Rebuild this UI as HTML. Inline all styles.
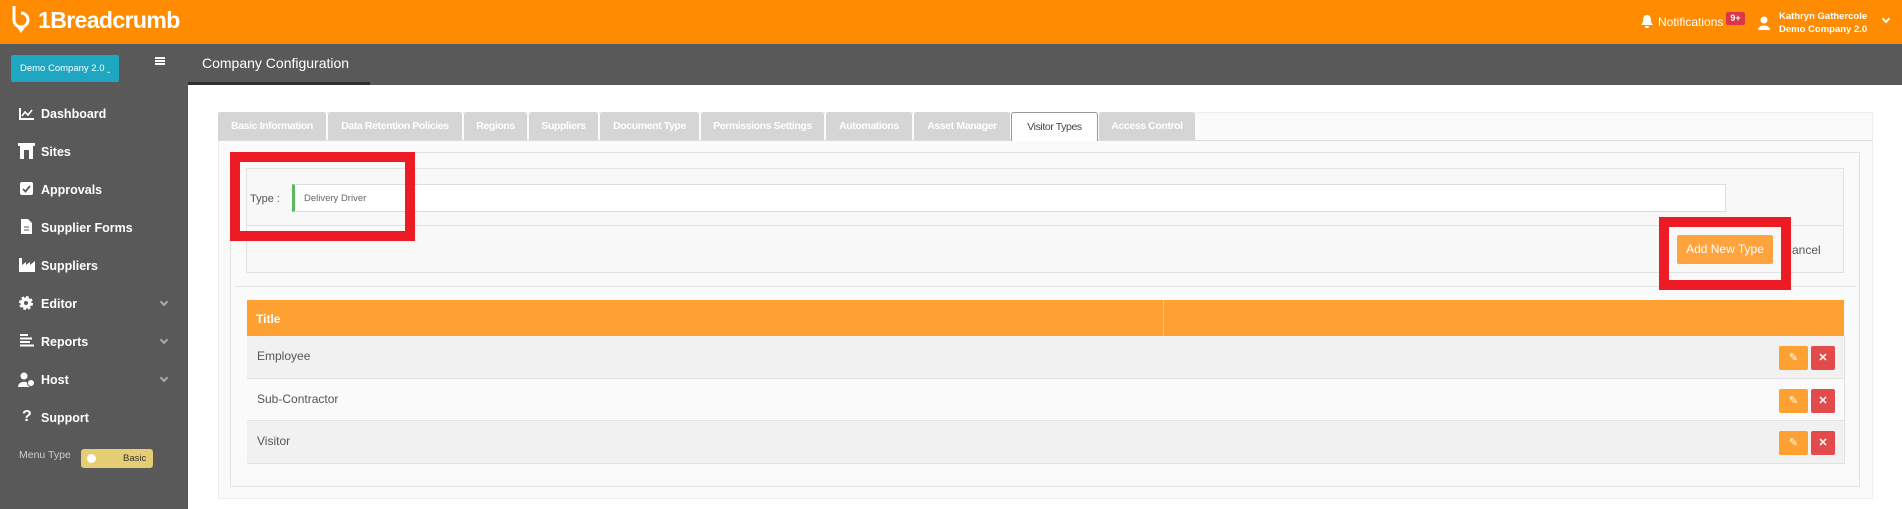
<!DOCTYPE html>
<html><head><meta charset="utf-8"><style>
*{box-sizing:border-box;margin:0;padding:0}
body{width:1902px;height:509px;overflow:hidden;font-family:"Liberation Sans",sans-serif;background:#fff;position:relative}
.a{position:absolute}
.hdr{left:0;top:0;width:1902px;height:44px;background:#ff8c00}
.bar{left:0;top:44px;width:1902px;height:41px;background:#595959}
.side{left:0;top:85px;width:188px;height:424px;background:#595959}
.mi{position:absolute;left:41px;color:#fff;font-size:12.5px;font-weight:bold}
.chev{position:absolute;left:161px;width:6px;height:6px;border-right:2px solid #aaa;border-bottom:2px solid #aaa;transform:rotate(45deg)}
.tab{position:absolute;top:112px;height:28px;background:#d5d5d5;border-radius:3px 3px 0 0;color:#fff;font-size:10.5px;font-weight:bold;text-align:center;line-height:28px;letter-spacing:-.4px}
.row{position:absolute;left:247px;width:1597px;border-bottom:1px solid #e2e2e2;font-size:12px;color:#555}
.row span{position:absolute;left:10px;top:13px}
.eb{position:absolute;width:29px;height:24px;background:#ffa033;border-radius:2px;color:#fff;font-size:11px;text-align:center;line-height:24px}
.db{position:absolute;width:24px;height:24px;background:#e24b4b;border-radius:2px;color:#fff;font-size:11px;font-weight:bold;text-align:center;line-height:24px}
</style></head><body>
<div class="a hdr"></div>
<svg class="a" style="left:9px;top:4px" width="24" height="30" viewBox="0 0 24 30"><path d="M5 2 L5 16 A7 7 0 1 0 12 9" fill="none" stroke="#fff" stroke-width="3"/><path d="M7 22 L12 29 L17 22" fill="#fff"/></svg>
<div class="a" style="left:38px;top:7px;color:#fff;font-size:23px;font-weight:bold;letter-spacing:-.6px">1Breadcrumb</div>
<svg class="a" style="left:1641px;top:14px" width="12" height="14" viewBox="0 0 12 14"><path d="M6 1 C2 1 2 5 2 8 L0 11 L12 11 L10 8 C10 5 10 1 6 1Z M4 12 h4 a2 2 0 0 1 -4 0z" fill="#fff"/></svg>
<div class="a" style="left:1658px;top:15px;color:#fff;font-size:12px">Notifications</div>
<div class="a" style="left:1726px;top:12px;width:19px;height:13px;background:#dc3545;border-radius:2px;color:#fff;font-size:9px;font-weight:bold;text-align:center;line-height:13px">9+</div>
<svg class="a" style="left:1758px;top:16px" width="12" height="14" viewBox="0 0 12 14"><circle cx="6" cy="4" r="3.5" fill="#fff"/><path d="M0 14 C0 8 12 8 12 14Z" fill="#fff"/></svg>
<div class="a" style="left:1779px;top:10px;color:#fff;font-size:9.5px;font-weight:bold;line-height:13px">Kathryn Gathercole<br>Demo Company 2.0</div>
<div class="a" style="left:1883px;top:16px;width:6px;height:6px;border-right:2px solid #fff;border-bottom:2px solid #fff;transform:rotate(45deg)"></div>

<div class="a bar"></div>
<div class="a" style="left:11px;top:55px;width:108px;height:27px;background:#1fa6c0;border-radius:2px;color:#fff;font-size:9.5px;line-height:27px;padding-left:9px">Demo Company 2.0 ˬ</div>
<div class="a" style="left:155px;top:57px;width:10px;height:2px;background:#fff;box-shadow:0 3px 0 #fff,0 6px 0 #fff"></div>
<div class="a" style="left:202px;top:55px;color:#fff;font-size:14px">Company Configuration</div>
<div class="a" style="left:188px;top:82px;width:182px;height:3px;background:#2f2f2f"></div>

<div class="a side"></div>
<div class="mi" style="top:107px">Dashboard</div>
<div class="mi" style="top:145px">Sites</div>
<div class="mi" style="top:183px">Approvals</div>
<div class="mi" style="top:221px">Supplier Forms</div>
<div class="mi" style="top:259px">Suppliers</div>
<div class="mi" style="top:297px">Editor</div>
<div class="mi" style="top:335px">Reports</div>
<div class="mi" style="top:373px">Host</div>
<div class="mi" style="top:411px">Support</div>
<svg class="a" style="left:19px;top:107px" width="16" height="13"><path d="M1 1V12H15" stroke="#fff" stroke-width="2" fill="none"/><path d="M3 9L6 5L9 8L13 3" stroke="#fff" stroke-width="1.6" fill="none"/></svg>
<svg class="a" style="left:18px;top:143px" width="17" height="16"><path d="M0 0H17V3H15V16H11V7H6V16H2V3H0Z" fill="#fff"/></svg>
<svg class="a" style="left:20px;top:182px" width="13" height="13"><rect width="13" height="13" rx="2" fill="#fff"/><path d="M3 7L5.5 9.5L10 4" stroke="#595959" stroke-width="1.8" fill="none"/></svg>
<svg class="a" style="left:21px;top:219px" width="11" height="15"><path d="M0 0H7L11 4V15H0Z" fill="#fff"/><path d="M3 8H8M3 11H8" stroke="#595959"/></svg>
<svg class="a" style="left:19px;top:258px" width="16" height="14"><path d="M0 0H3V7L7 4V7L11 4V7L16 3V14H0Z" fill="#fff"/></svg>
<svg class="a" style="left:19px;top:296px" width="14" height="14"><circle cx="7" cy="7" r="5.5" fill="#fff" stroke="#fff" stroke-width="3" stroke-dasharray="2.5 1.8"/><circle cx="7" cy="7" r="2" fill="#595959"/></svg>
<svg class="a" style="left:20px;top:334px" width="14" height="13"><path d="M0 1H8M0 4.5H12M0 8H10M0 11.5H14" stroke="#fff" stroke-width="2"/></svg>
<svg class="a" style="left:18px;top:372px" width="18" height="15"><circle cx="6" cy="4" r="3.5" fill="#fff"/><path d="M0 15C0 8 12 8 12 15Z" fill="#fff"/><circle cx="13" cy="11" r="3.5" fill="#fff" stroke="#595959"/></svg>
<div class="a" style="left:22px;top:408px;color:#fff;font-size:16px;font-weight:bold">?</div>
<div class="chev" style="top:299px"></div>
<div class="chev" style="top:337px"></div>
<div class="chev" style="top:375px"></div>
<div class="a" style="left:19px;top:449px;color:#ccc;font-size:10.5px">Menu Type</div>
<div class="a" style="left:81px;top:449px;width:72px;height:19px;background:#e5cd73;border-radius:3px"></div>
<div class="a" style="left:87px;top:454px;width:9px;height:9px;border-radius:50%;background:#fff"></div>
<div class="a" style="left:123px;top:453px;font-size:9.5px;color:#333">Basic</div>

<div class="a" style="left:218px;top:112px;width:1655px;height:387px;background:#fafafa;border:1px solid #eee"></div>
<div class="a" style="left:218px;top:140px;width:1655px;height:1px;background:#ddd"></div>
<div class="tab" style="left:218px;width:108px">Basic Information</div>
<div class="tab" style="left:328px;width:134px">Data Retention Policies</div>
<div class="tab" style="left:464px;width:63px">Regions</div>
<div class="tab" style="left:529px;width:69px">Suppliers</div>
<div class="tab" style="left:600px;width:99px">Document Type</div>
<div class="tab" style="left:701px;width:123px">Permissions Settings</div>
<div class="tab" style="left:826px;width:86px">Automations</div>
<div class="tab" style="left:914px;width:96px">Asset Manager</div>
<div class="tab" style="left:1011px;width:87px;background:#fff;border:1px solid #999;border-bottom:none;color:#444;height:29px;font-weight:normal">Visitor Types</div>
<div class="tab" style="left:1099px;width:96px">Access Control</div>

<div class="a" style="left:230px;top:152px;width:1630px;height:335px;border:1px solid #e3e3e3;background:#fafafa"></div>
<div class="a" style="left:246px;top:168px;width:1598px;height:105px;border:1px solid #e3e3e3;background:#f8f8f8"></div>
<div class="a" style="left:246px;top:225px;width:1598px;height:1px;background:#e3e3e3"></div>
<div class="a" style="left:250px;top:193px;font-size:11px;color:#555">Type :</div>
<div class="a" style="left:292px;top:184px;width:1434px;height:28px;background:#fff;border:1px solid #ddd;border-left:3px solid #5cb85c"></div>
<div class="a" style="left:304px;top:193px;font-size:9.5px;color:#666">Delivery Driver</div>
<div class="a" style="left:1677px;top:235px;width:96px;height:29px;background:#ffa33e;border-radius:2px;color:#fff;font-size:12px;line-height:29px;text-align:center">Add New Type</div>
<div class="a" style="left:1792px;top:243px;font-size:12px;color:#555">ancel</div>
<div class="a" style="left:235px;top:286px;width:1621px;height:1px;background:#e3e3e3"></div>

<div class="a" style="left:230px;top:152px;width:185px;height:89px;border:10px solid #ed1c24"></div>
<div class="a" style="left:1659px;top:217px;width:132px;height:73px;border:10px solid #ed1c24"></div>

<div class="a" style="left:247px;top:300px;width:1597px;height:36px;background:#ffa033"></div>
<div class="a" style="left:1163px;top:300px;width:1px;height:164px;background:#e2e2e2"></div>
<div class="a" style="left:1163px;top:300px;width:1px;height:36px;background:#ffc27a"></div>
<div class="a" style="left:256px;top:312px;color:#fff;font-size:12px;font-weight:bold">Title</div>
<div class="a" style="left:247px;top:336px;width:1px;height:128px;background:#e2e2e2"></div>
<div class="a" style="left:1844px;top:336px;width:1px;height:128px;background:#e2e2e2"></div>
<div class="row" style="top:336px;height:43px;background:#f1f1f1"><span>Employee</span></div>
<div class="row" style="top:379px;height:42px;background:#fafafa"><span>Sub-Contractor</span></div>
<div class="row" style="top:421px;height:43px;background:#f1f1f1"><span>Visitor</span></div>
<div class="eb" style="left:1779px;top:346px">✎</div><div class="db" style="left:1811px;top:346px">✕</div>
<div class="eb" style="left:1779px;top:389px">✎</div><div class="db" style="left:1811px;top:389px">✕</div>
<div class="eb" style="left:1779px;top:431px">✎</div><div class="db" style="left:1811px;top:431px">✕</div>
</body></html>
